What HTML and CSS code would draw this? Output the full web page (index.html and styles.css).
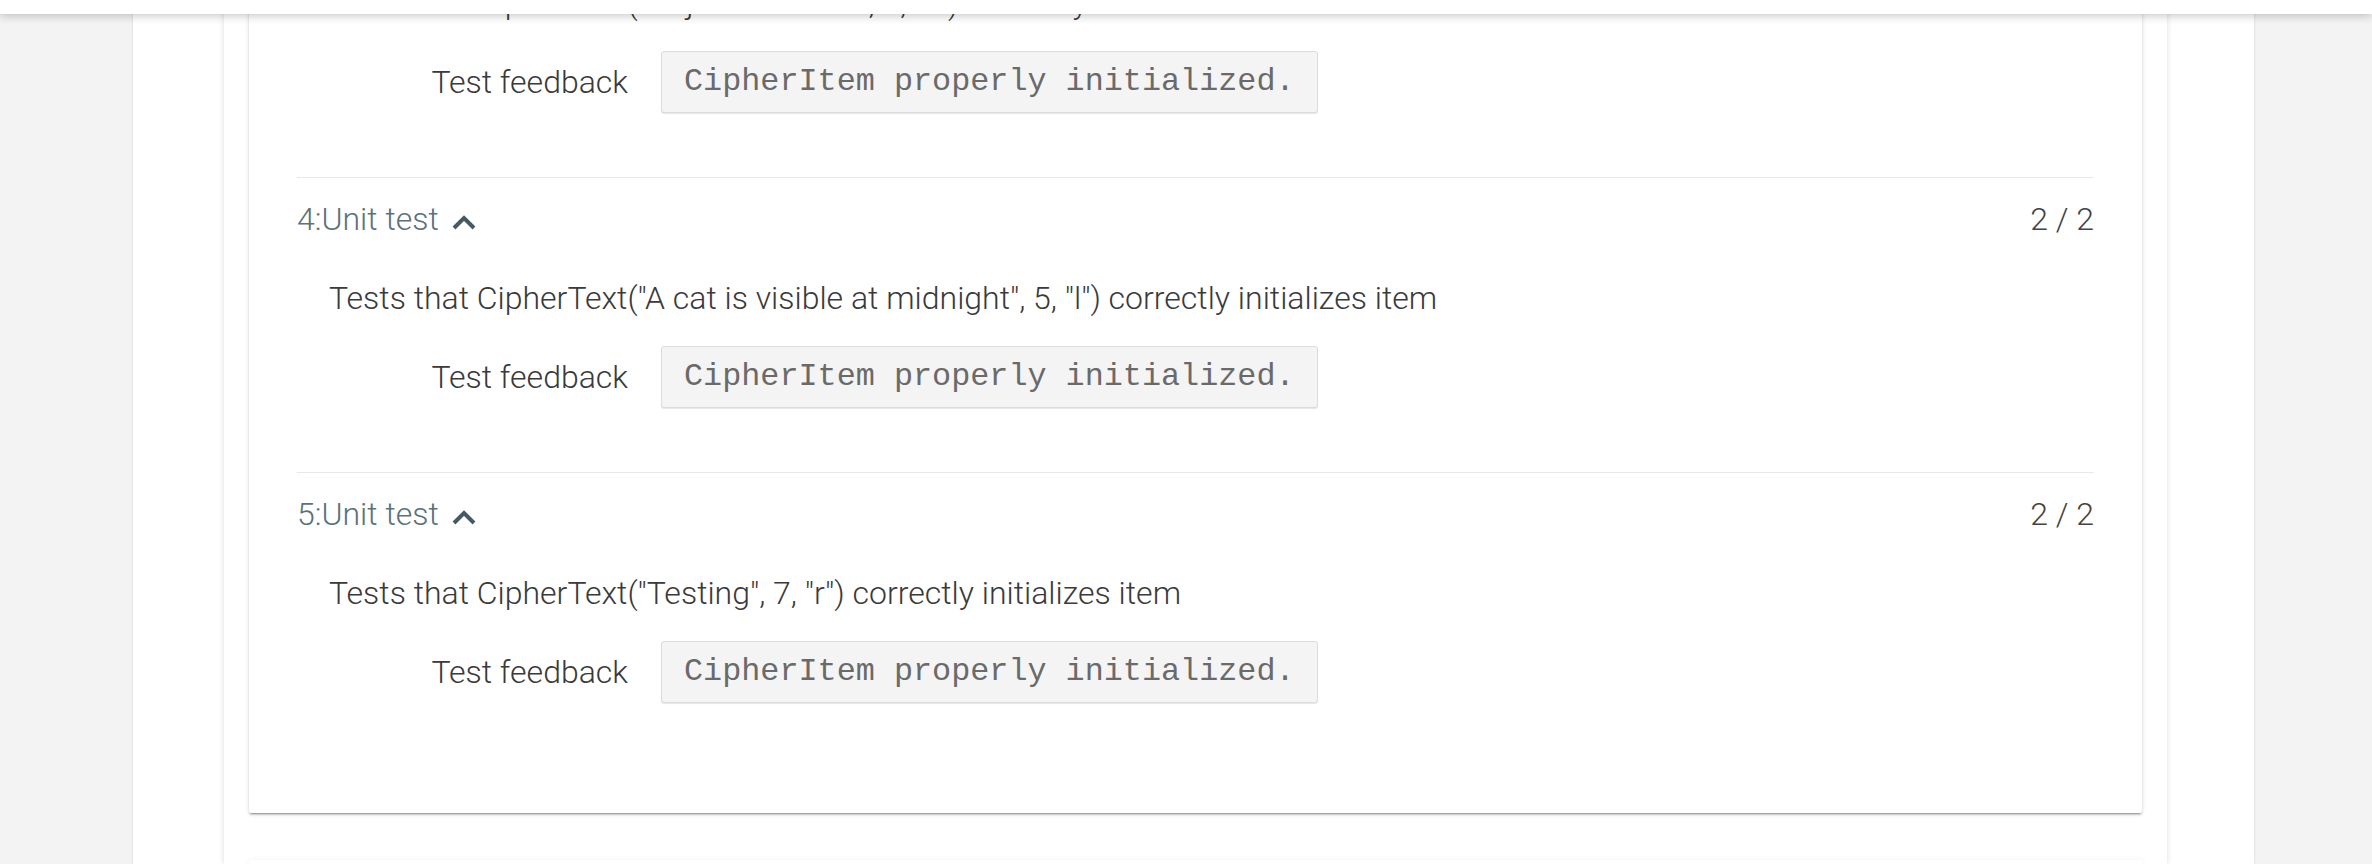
FILE: index.html
```html
<!DOCTYPE html>
<html lang="en">
<head>
<meta charset="utf-8">
<title>Test results</title>
<link rel="stylesheet" href="styles.css">
</head>
<body>
<header class="topbar"></header>
<main class="page">
  <div class="panel">
    <div class="card">
      <section class="test">
        <div class="test-head">
          <div class="test-title">3:Unit test
            <svg class="chev" viewBox="0 0 24 15" width="24" height="15"><path d="M2 13 L12 3 L22 13" fill="none" stroke="#455a64" stroke-width="4"/></svg>
          </div>
          <div class="test-score">2 / 2</div>
        </div>
        <p class="test-desc">Tests that CipherText("Object oriented", 3, "c") correctly initializes item</p>
        <div class="feedback">
          <span class="feedback-label">Test feedback</span>
          <pre class="feedback-box">CipherItem properly initialized.</pre>
        </div>
      </section>
      <section class="test">
        <div class="test-head">
          <div class="test-title">4:Unit test
            <svg class="chev" viewBox="0 0 24 15" width="24" height="15"><path d="M2 13 L12 3 L22 13" fill="none" stroke="#455a64" stroke-width="4"/></svg>
          </div>
          <div class="test-score">2 / 2</div>
        </div>
        <p class="test-desc">Tests that CipherText("A cat is visible at midnight", 5, "l") correctly initializes item</p>
        <div class="feedback">
          <span class="feedback-label">Test feedback</span>
          <pre class="feedback-box">CipherItem properly initialized.</pre>
        </div>
      </section>
      <section class="test">
        <div class="test-head">
          <div class="test-title">5:Unit test
            <svg class="chev" viewBox="0 0 24 15" width="24" height="15"><path d="M2 13 L12 3 L22 13" fill="none" stroke="#455a64" stroke-width="4"/></svg>
          </div>
          <div class="test-score">2 / 2</div>
        </div>
        <p class="test-desc">Tests that CipherText("Testing", 7, "r") correctly initializes item</p>
        <div class="feedback">
          <span class="feedback-label">Test feedback</span>
          <pre class="feedback-box">CipherItem properly initialized.</pre>
        </div>
      </section>
    </div>
    <div class="card card-next"></div>
  </div>
</main>
</body>
</html>
```
FILE: styles.css
```css
html, body {
  margin: 0;
  padding: 0;
}
body {
  background: #f3f3f3;
  font-family: Roboto, "Liberation Sans", sans-serif;
  height: 864px;
  overflow: hidden;
}
.topbar {
  position: fixed;
  top: 0;
  left: 0;
  right: 0;
  height: 14px;
  background: #fff;
  box-shadow: 0 2px 10px rgba(0, 0, 0, 0.22);
  z-index: 10;
}
.page {
  margin-left: 133px;
  width: 2121px;
  height: 864px;
  background: #fff;
  box-shadow: 0 0 3px rgba(0, 0, 0, 0.12);
  overflow: hidden;
}
.panel {
  margin-left: 91px;
  width: 1943px;
  height: 864px;
  box-sizing: border-box;
  padding: 0 25px;
  background: #fff;
  box-shadow: -2px 0 4px rgba(0, 0, 0, 0.07), 2px 0 4px rgba(0, 0, 0, 0.07);
  display: flex;
  flex-direction: column;
  gap: 47px;
}
.card {
  flex: none;
  background: #fff;
  border-radius: 2px;
  box-shadow: 0 2px 2px rgba(0, 0, 0, 0.14), 0 3px 1px -2px rgba(0, 0, 0, 0.2), 0 1px 5px rgba(0, 0, 0, 0.12);
  padding: 0 48px 46px;
  margin-top: -118px;
}
.card-next {
  margin-top: 0;
  height: 200px;
  box-shadow: 0 0 6px rgba(0, 0, 0, 0.06);
}
.test {
  border-top: 1px solid #e8e8e8;
  padding: 23px 0 64px;
}
.test-head {
  display: flex;
  justify-content: space-between;
  align-items: center;
  height: 36px;
}
.test-title {
  display: flex;
  align-items: center;
  font-size: 32px;
  font-weight: 300;
  color: #5b717c;
  line-height: 36px;
}
.chev {
  margin-left: 13px;
  margin-top: 6px;
}
.test-score {
  font-size: 32px;
  font-weight: 300;
  color: #444;
  line-height: 36px;
}
.test-desc {
  margin: 43px 0 0 32px;
  font-size: 32px;
  font-weight: 300;
  color: #3a3a3a;
  line-height: 36px;
}
.feedback {
  display: flex;
  align-items: center;
  margin: 30px 0 0 32px;
}
.feedback-label {
  width: 299px;
  text-align: right;
  margin-right: 33px;
  font-size: 32px;
  font-weight: 300;
  color: #3a3a3a;
}
.feedback-box {
  margin: 0;
  background: #f4f4f4;
  border: 1px solid #dcdcdc;
  border-radius: 3px;
  box-shadow: 0 1px 1px rgba(0, 0, 0, 0.1);
  padding: 11px 22px;
  font-family: "Liberation Mono", "Courier New", monospace;
  font-size: 31.8px;
  line-height: 38px;
  color: #6a6a6a;
}
```
